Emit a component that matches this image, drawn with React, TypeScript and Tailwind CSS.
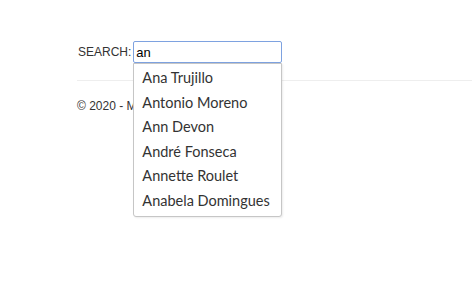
import { useState } from "react";

const names = [
  "Ana Trujillo",
  "Antonio Moreno",
  "Ann Devon",
  "André Fonseca",
  "Annette Roulet",
  "Anabela Domingues",
];

export default function App() {
  const [query, setQuery] = useState("an");

  return (
    <div className="min-h-screen bg-white pt-[41px] pl-[77px] pr-[2px] font-['Liberation_Sans',Arial,sans-serif] text-[#333]">
      {/* Search row */}
      <div className="flex items-center h-[22px] pl-[1px]">
        <span className="text-[12px] leading-none">SEARCH:</span>
        <div className="relative ml-[2px]">
          <input
            value={query}
            onChange={(e) => setQuery(e.target.value)}
            autoFocus
            className="block w-[149px] h-[22px] px-[2px] text-[13px] text-black border border-[#7ea2e0] rounded-[2px] outline-none bg-white font-['Liberation_Sans',Arial,sans-serif]"
          />
          <ul className="absolute left-0 top-[22px] z-10 w-[149px] py-[2px] bg-white border border-[#c6c6c6] rounded-b-[3px] shadow-[1px_1px_2px_rgba(0,0,0,0.08)] font-['Lato','Open_Sans',sans-serif] text-[14.5px] text-[#333]">
            {names.map((n) => (
              <li key={n} className="h-[24.6px] leading-[24.6px] pl-[8px] whitespace-nowrap">
                {n}
              </li>
            ))}
          </ul>
        </div>
      </div>

      <hr className="mt-[17px] border-t border-[#eeeeee]" />

      <footer className="mt-[19px] text-[12px] leading-none">
        © 2020 - My ASP.NET Application
      </footer>
    </div>
  );
}
